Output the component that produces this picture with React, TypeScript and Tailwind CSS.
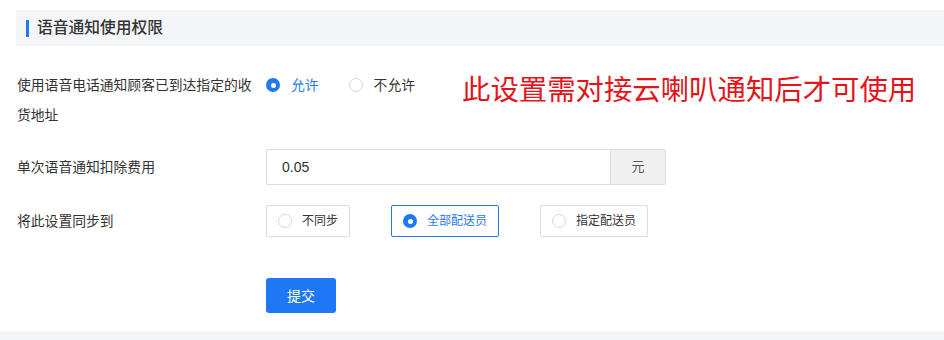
import React, { useState } from 'react';

const FONT = '"Noto Sans", "Noto Sans CJK SC", sans-serif';

function Dot({ checked }: { checked: boolean }) {
  return checked ? (
    <span className="inline-flex h-[14px] w-[14px] items-center justify-center rounded-full bg-[#1f79f2]">
      <span className="h-[5px] w-[5px] rounded-full bg-white" />
    </span>
  ) : (
    <span className="inline-block h-[14px] w-[14px] rounded-full border border-[#d9d9d9] bg-white" />
  );
}

const SYNC_OPTIONS = [
  { id: 'none', label: '不同步', width: 'w-[84px]' },
  { id: 'all', label: '全部配送员', width: 'w-[108px]' },
  { id: 'pick', label: '指定配送员', width: 'w-[108px]' },
];

export default function App() {
  const [allow, setAllow] = useState(true);
  const [sync, setSync] = useState('all');
  const [fee, setFee] = useState('0.05');

  return (
    <div className="h-[340px] w-[944px] overflow-hidden bg-white text-[#333]" style={{ fontFamily: FONT }}>
      <div className="pt-[10px]">
        {/* section title */}
        <div className="ml-[16px] flex h-[36px] items-center bg-[#f3f5f9]">
          <span className="ml-[10px] h-[17px] w-[3px] bg-[#1f79f2]" />
          <span className="ml-[8px] text-[15.75px] font-medium text-[#333]">语音通知使用权限</span>
        </div>

        {/* allow row */}
        <div className="mt-[24px] flex">
          <div className="w-[266px] pl-[17px] pr-[4px] text-[13.8px] leading-[30px] text-[#333]">
            使用语音电话通知顾客已到达指定的收货地址
          </div>
          <div className="flex h-[30px] items-center text-[13.8px]">
            <button className="flex items-center" onClick={() => setAllow(true)}>
              <Dot checked={allow} />
              <span className={`ml-[11px] ${allow ? 'text-[#1f79f2]' : 'text-[#333]'}`}>允许</span>
            </button>
            <button className="ml-[30px] flex items-center" onClick={() => setAllow(false)}>
              <Dot checked={!allow} />
              <span className={`ml-[11px] ${!allow ? 'text-[#1f79f2]' : 'text-[#333]'}`}>不允许</span>
            </button>
          </div>
          <div className="ml-[47px] mt-[1px] flex h-[34px] items-center text-[28.4px] leading-none text-[#e3151b]" style={{ fontFamily: '"Noto Sans CJK SC", sans-serif' }}>
            此设置需对接云喇叭通知后才可使用
          </div>
        </div>

        {/* fee row */}
        <div className="mt-[19px] flex items-center">
          <div className="w-[266px] pl-[17px] text-[13.8px] text-[#333]">单次语音通知扣除费用</div>
          <div className="flex h-[36px] w-[400px] rounded-[2px] border border-[#dcdcdc]">
            <input
              value={fee}
              onChange={(e) => setFee(e.target.value)}
              className="min-w-0 flex-1 px-[15px] text-[14px] text-[#333] outline-none"
              style={{ fontFamily: '"Liberation Sans", sans-serif' }}
            />
            <span className="flex w-[55px] items-center justify-center border-l border-[#dcdcdc] bg-[#f0f0f0] text-[13px] text-[#555]">
              元
            </span>
          </div>
        </div>

        {/* sync row */}
        <div className="mt-[20px] flex items-center">
          <div className="w-[266px] pl-[17px] text-[13.8px] text-[#333]">将此设置同步到</div>
          <div className="flex gap-[41px]">
            {SYNC_OPTIONS.map((o) => {
              const on = sync === o.id;
              return (
                <button
                  key={o.id}
                  onClick={() => setSync(o.id)}
                  className={`flex h-[32px] ${o.width} items-center rounded-[2px] border pl-[11px] text-[12px] ${
                    on ? 'border-[#1f79f2] text-[#1f79f2]' : 'border-[#dcdcdc] text-[#333]'
                  }`}
                >
                  <Dot checked={on} />
                  <span className="ml-[10px]">{o.label}</span>
                </button>
              );
            })}
          </div>
        </div>

        {/* submit */}
        <div className="ml-[266px] mt-[41px]">
          <button className="h-[35px] w-[70px] rounded-[3px] bg-[#1e78f6] text-[14px] text-white">提交</button>
        </div>
      </div>
      <div className="mt-[18px] h-[20px] bg-[#f3f5f9]" />
    </div>
  );
}
